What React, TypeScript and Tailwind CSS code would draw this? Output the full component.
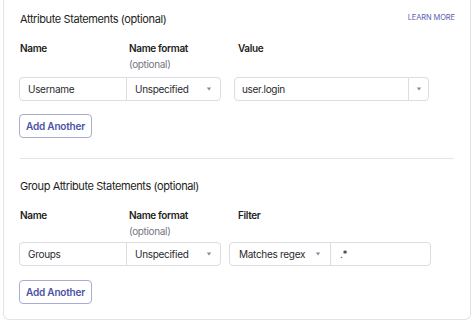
const font = { fontFamily: "Inter, 'Noto Sans', sans-serif" };

function Caret() {
  return (
    <svg width="6" height="4" viewBox="0 0 6 4" className="shrink-0">
      <path d="M0.8 0.5h4.4L3 3.4z" fill="#8a8a93" />
    </svg>
  );
}

function AddAnother() {
  return (
    <button className="h-[24px] w-[73px] -ml-px rounded-[4px] border border-[#a9abd3] text-[10px] font-semibold tracking-[-0.2px] text-[#4c51a6] bg-white whitespace-nowrap">
      Add Another
    </button>
  );
}

function Headers({ third }: { third: string }) {
  return (
    <div className="flex text-[10px] leading-[14px] tracking-[-0.35px]">
      <div className="w-[109px] font-semibold text-[#1d1d21]">Name</div>
      <div className="w-[109px]">
        <div className="font-semibold text-[#1d1d21]">Name format</div>
        <div className="mt-[2px] text-[#76767f]">(optional)</div>
      </div>
      <div className="font-semibold text-[#1d1d21]">{third}</div>
    </div>
  );
}

const box = "h-[24px] flex items-center border border-[#dcdce1] text-[10px] tracking-[-0.3px] text-[#2a2a2e] whitespace-nowrap";

function NameGroup({ name }: { name: string }) {
  return (
    <div className="flex -ml-px">
      <div className={`${box} w-[108px] pl-[8px] rounded-l-[4px]`}>{name}</div>
      <div className={`${box} w-[95px] -ml-px justify-between pl-[8px] pr-[8px] rounded-r-[4px]`}>
        <span>Unspecified</span>
        <Caret />
      </div>
    </div>
  );
}

export default function App() {
  return (
    <div className="min-h-screen bg-white px-[3px]" style={font}>
      <div className="border-x border-b border-[#e3e3e7] rounded-b-[6px] px-[16px] pb-[15px]">
        <section className="pt-[11px]">
          <div className="flex items-center justify-between">
            <h2 className="text-[11px] leading-[16px] tracking-[-0.4px] text-[#1d1d21]">Attribute Statements (optional)</h2>
            <a className="text-[7.5px] tracking-[-0.1px] text-[#5a5fb2] uppercase -mt-[3px] -mr-px">Learn More</a>
          </div>
          <div className="mt-[14px]">
            <Headers third="Value" />
          </div>
          <div className="mt-[6px] flex">
            <NameGroup name="Username" />
            <div className="ml-[13px] flex">
              <div className={`${box} w-[175px] pl-[7px] rounded-l-[4px]`}>user.login</div>
              <div className={`${box} w-[21px] -ml-px justify-center rounded-r-[4px]`}>
                <Caret />
              </div>
            </div>
          </div>
          <div className="mt-[13px] flex">
            <AddAnother />
          </div>
        </section>
        <div className="mt-[20px] h-px bg-[#e5e5e9]" />
        <section className="pt-[19px]">
          <h2 className="text-[11px] leading-[16px] tracking-[-0.4px] text-[#1d1d21]">Group Attribute Statements (optional)</h2>
          <div className="mt-[14px]">
            <Headers third="Filter" />
          </div>
          <div className="mt-[4px] flex">
            <NameGroup name="Groups" />
            <div className="ml-[8px] flex">
              <div className={`${box} w-[102px] justify-between pl-[9px] pr-[9px] rounded-l-[4px]`}>
                <span>Matches regex</span>
                <Caret />
              </div>
              <div className={`${box} w-[101px] -ml-px pl-[9px] rounded-r-[4px]`}>.*</div>
            </div>
          </div>
          <div className="mt-[14px] flex">
            <AddAnother />
          </div>
        </section>
      </div>
    </div>
  );
}
